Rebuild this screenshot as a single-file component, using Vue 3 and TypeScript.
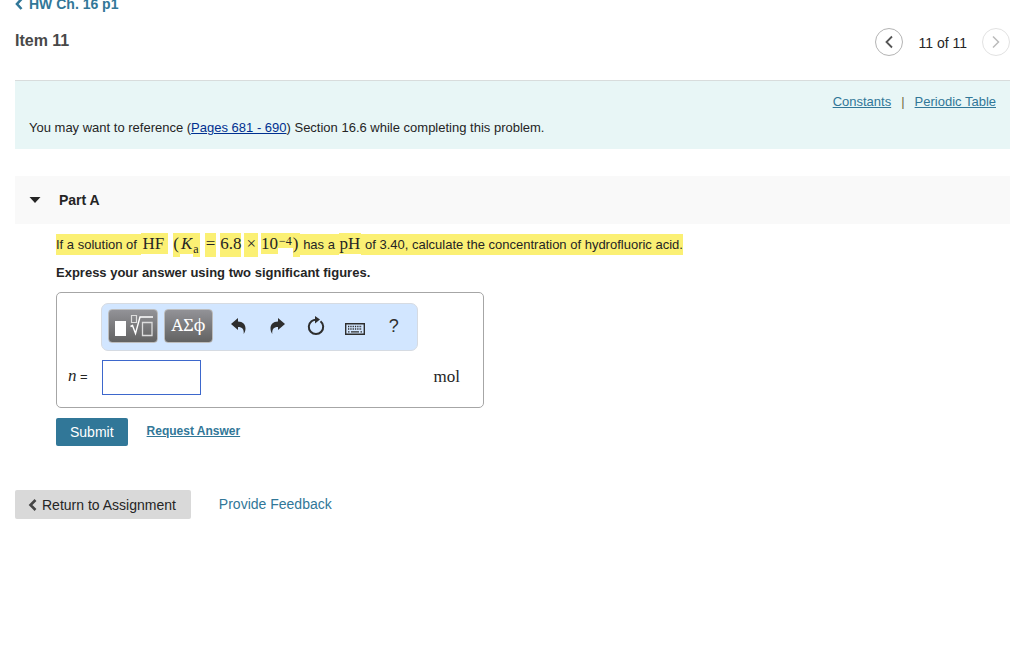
<script setup lang="ts">
import { ref } from 'vue'

const answer = ref('')
const expanded = ref(true)
</script>

<template>
  <main class="page">
    <a class="back" href="#">
      <svg width="8" height="12" viewBox="0 0 8 12" aria-hidden="true"><path d="M6.500 1 2 6l4.500 5" fill="none" stroke="currentColor" stroke-width="2.600" /></svg>
      <span>HW Ch. 16 p1</span>
    </a>

    <header class="top">
      <h1>Item 11</h1>
      <nav class="pager" aria-label="Items">
        <button class="round" type="button" aria-label="Previous item">
          <svg width="10" height="14" viewBox="0 0 10 14"><path d="M8 1.500 2.500 7 8 12.500" fill="none" stroke="currentColor" stroke-width="1.800" /></svg>
        </button>
        <span class="count">11 of 11</span>
        <button class="round off" type="button" aria-label="Next item" disabled>
          <svg width="10" height="14" viewBox="0 0 10 14"><path d="M2 1.500 7.500 7 2 12.500" fill="none" stroke="currentColor" stroke-width="1.500" /></svg>
        </button>
      </nav>
    </header>

    <section class="info">
      <div class="resources">
        <a href="#">Constants</a><span class="bar">|</span><a href="#">Periodic Table</a>
      </div>
      <p>You may want to reference (<a href="#">Pages 681 - 690</a>) Section 16.6 while completing this problem.</p>
    </section>

    <h2 class="part">
      <button type="button" :aria-expanded="expanded" @click="expanded = !expanded">
        <svg width="12" height="6" viewBox="0 0 12 6" aria-hidden="true"><path d="M0.500 0h11L6 6z" fill="currentColor" /></svg>
        <span>Part A</span>
      </button>
    </h2>

    <section v-if="expanded" class="body">
      <p class="question">
        <span class="hl words">If a solution of&nbsp;</span>
        <span class="hl math hf">HF</span>
        <span class="hl math tall paren">(</span>
        <span class="hl math k"><i>K</i></span>
        <span class="hl math tall sub"><small>a</small></span>
        <span class="hl math tall eq">=</span>
        <span class="hl math tall num">6.8</span>
        <span class="hl math tall times">×</span>
        <span class="hl math ten">10</span>
        <span class="hl math sup"><small>−4</small></span>
        <span class="hl math tall paren">)</span>
        <span class="hl words">&nbsp;has a&nbsp;</span>
        <span class="hl math ph">pH</span>
        <span class="hl words">&nbsp;of 3.40, calculate the concentration of hydrofluoric acid.</span>
      </p>
      <p class="instruction">Express your answer using two significant figures.</p>

      <form class="answer" @submit.prevent>
        <div class="editor">
          <div class="toolbar" role="toolbar" aria-label="Equation tools">
            <button class="key" type="button" aria-label="Templates">
              <svg width="40" height="24" viewBox="0 0 40 24">
                <path d="M2 7h11v15H2z" fill="#fff" />
                <path d="M18.500 1.500h5v7h-5z" fill="none" stroke="#ddd" stroke-width="1.200" />
                <path d="m17.500 12.500 2-1 3 8 4.500-16.500h13" fill="none" stroke="#fff" stroke-width="1.400" />
                <path d="M29.500 8.500h9.500v13h-9.500z" fill="none" stroke="#ddd" stroke-width="1.300" />
              </svg>
            </button>
            <button class="key greek" type="button">ΑΣϕ</button>
            <button class="tool" type="button" aria-label="Undo">
              <svg width="16" height="18" viewBox="0 0 16 18"><path d="M0 7 7 1v3.500c5 .2 7.500 3 7.500 7 0 2-.7 4-1.800 5.500.4-4.800-1.200-7-5.700-7V13z" fill="currentColor" /></svg>
            </button>
            <button class="tool" type="button" aria-label="Redo">
              <svg width="16" height="18" viewBox="0 0 16 18"><path d="M16 7 9 1v3.500c-5 .2-7.500 3-7.500 7 0 2 .7 4 1.800 5.500-.4-4.800 1.200-7 5.700-7V13z" fill="currentColor" /></svg>
            </button>
            <button class="tool" type="button" aria-label="Reset">
              <svg width="18" height="20" viewBox="0 0 18 20"><path d="M13.500 5.200a7.200 7.200 0 1 1-9 0q2-1.500 4.500-1.500" fill="none" stroke="currentColor" stroke-width="2" /><path d="M8 0l5 3.500-5 4z" fill="currentColor" /></svg>
            </button>
            <button class="tool" type="button" aria-label="Keyboard shortcuts">
              <svg class="keyboard" width="20" height="12" viewBox="0 0 20 12"><path d="M.7.700h18.600v10.600H.7z" fill="none" stroke="currentColor" stroke-width="1.400" /><path d="M3 3.500h14M3 6h14" fill="none" stroke="currentColor" stroke-width="1.300" stroke-dasharray="1.300 1" /><path d="M3 8.800h1.500m1.500 0h8m1.500 0H17" stroke="currentColor" stroke-width="1.300" /></svg>
            </button>
            <button class="tool help" type="button" aria-label="Help">?</button>
          </div>
          <div class="entry">
            <label for="moles"><i>n</i> =</label>
            <input id="moles" v-model="answer" type="text" autocomplete="off" />
            <span class="unit">mol</span>
          </div>
        </div>
        <div class="actions">
          <button class="submit" type="submit">Submit</button>
          <a href="#">Request Answer</a>
        </div>
      </form>
    </section>

    <footer class="foot">
      <button class="return" type="button">
        <svg width="9" height="12" viewBox="0 0 9 12" aria-hidden="true"><path d="M7.500 1 2.500 6l5 5" fill="none" stroke="#444" stroke-width="2.600" /></svg>
        <span>Return to Assignment</span>
      </button>
      <a href="#">Provide Feedback</a>
    </footer>
  </main>
</template>

<style>
body {
  margin: 0;
  background: #fff;
}
</style>

<style scoped>
.page {
  padding: 0 14px 0 15px;
  font-family: "Liberation Sans", Arial, sans-serif;
  font-size: 13px;
  color: #252525;
}
h1, h2, p {
  margin: 0;
}
button {
  font: inherit;
  color: inherit;
  border: 0;
  padding: 0;
  background: none;
  cursor: pointer;
}
svg {
  display: block;
  flex: none;
}
a {
  color: #317798;
}
.back {
  display: flex;
  align-items: center;
  gap: 6px;
  height: 8px;
  font-size: 14px;
  font-weight: bold;
  line-height: 8px;
  text-decoration: none;
}
.top {
  display: flex;
  align-items: center;
  justify-content: space-between;
  height: 28px;
  padding: 20px 0 24px;
}
h1 {
  font-size: 16px;
  line-height: 18px;
  padding-bottom: 2px;
  color: #484848;
}
.pager {
  display: flex;
  align-items: center;
  gap: 15px;
}
.round {
  display: grid;
  place-items: center;
  box-sizing: border-box;
  width: 28px;
  height: 28px;
  border: 1px solid #b4b4b4;
  border-radius: 50%;
  color: #555;
}
.off {
  border-color: #e2e2e2;
  color: #bbb;
}
.count {
  font-size: 14px;
  padding-top: 2px;
}
.info {
  border-top: 1px solid #d8dcdc;
  background: #e8f6f6;
  padding: 12px 14px;
  line-height: 18px;
}
.info p {
  padding-top: 8px;
}
.info p a {
  color: #003090;
}
.resources {
  display: flex;
  justify-content: flex-end;
}
.bar {
  padding: 0 10px;
  color: #706f42;
}
.part {
  margin-top: 27px;
  background: #f9f9f9;
  font-size: 14px;
}
.part button {
  display: flex;
  align-items: center;
  gap: 18px;
  width: 100%;
  height: 48px;
  padding: 0 14px;
  font-weight: bold;
}
.body {
  padding: 9px 0 0 41px;
}
.question {
  display: flex;
  align-items: flex-start;
  white-space: nowrap;
  height: 24px;
}
.hl {
  background: #fbf074;
  height: 21px;
  line-height: 22px;
}
.words {
  margin-top: 1px;
}
.math {
  font-family: "Liberation Serif", "Times New Roman", serif;
  font-size: 17px;
}
.tall {
  height: 24px;
}
.hf {
  padding: 0 4px 0 2px;
  margin-right: 5px;
}
.paren {
  padding: 0 1px 0 0;
}
.k {
  padding: 0 1px;
}
.sub {
  padding-right: 1px;
  margin-right: 5px;
  line-height: 30px;
}
.math small {
  font-size: 12px;
}
.eq {
  padding: 0 1px;
  margin-right: 4px;
}
.num, .times {
  margin-right: 3px;
}
.times {
  padding: 0 2px;
}
.sup {
  height: 15px;
  padding: 0 1px;
  line-height: 13px;
}
.ph {
  padding: 0 1px;
}
.instruction {
  padding-top: 8px;
  line-height: 16px;
  font-weight: bold;
}
.editor {
  box-sizing: border-box;
  max-width: 428px;
  margin-top: 11px;
  padding: 10px 11px 12px;
  border: 1px solid #a6a6a6;
  border-radius: 5px;
}
.toolbar {
  display: flex;
  align-items: center;
  box-sizing: border-box;
  width: 317px;
  height: 48px;
  margin-left: 33px;
  padding: 0 4px 2px 6px;
  border: 1px solid #d6dbe2;
  border-radius: 7px;
  background: #d2e6ff;
  color: #2e2e2e;
}
.key {
  display: grid;
  place-items: center;
  box-sizing: border-box;
  width: 50px;
  height: 34px;
  margin-right: 6px;
  border: 1px solid #bcbcbc;
  border-radius: 4px;
  background: linear-gradient(#929297, #626262);
  color: #fff;
}
.greek {
  font-family: "Noto Serif", "DejaVu Serif", serif;
  font-size: 17px;
  line-height: 18px;
  padding-bottom: 2px;
}
.tool {
  display: grid;
  place-items: center;
  width: 39px;
  height: 34px;
}
.help {
  font-size: 18px;
}
.keyboard {
  margin-top: 6px;
}
.entry {
  display: flex;
  align-items: center;
  margin-top: 9px;
  padding-right: 12px;
}
.entry label {
  width: 34px;
}
.entry i, .unit {
  font-family: "Liberation Serif", "Times New Roman", serif;
  font-size: 17px;
}
.entry label, .unit {
  line-height: 18px;
  padding-bottom: 2px;
}
.entry input {
  box-sizing: border-box;
  width: 99px;
  height: 35px;
  padding: 0 6px;
  border: 1px solid #3d67cc;
  background: #fff;
  font: inherit;
  outline: 0;
}
.unit {
  margin-left: auto;
}
.actions {
  display: flex;
  align-items: center;
  gap: 19px;
  margin-top: 10px;
}
.actions a {
  font-size: 12px;
  font-weight: bold;
  padding-bottom: 2px;
}
.submit {
  height: 28px;
  padding: 0 14px;
  border-radius: 2px;
  background: #317798;
  color: #fff;
  font-size: 14px;
}
.foot {
  display: flex;
  align-items: center;
  gap: 28px;
  margin-top: 44px;
  font-size: 14px;
}
.foot a {
  text-decoration: none;
  padding-bottom: 2px;
}
.return {
  display: flex;
  align-items: center;
  gap: 5px;
  height: 29px;
  padding: 0 15px 0 13px;
  border-radius: 2px;
  background: #d9d9d9;
}
</style>
